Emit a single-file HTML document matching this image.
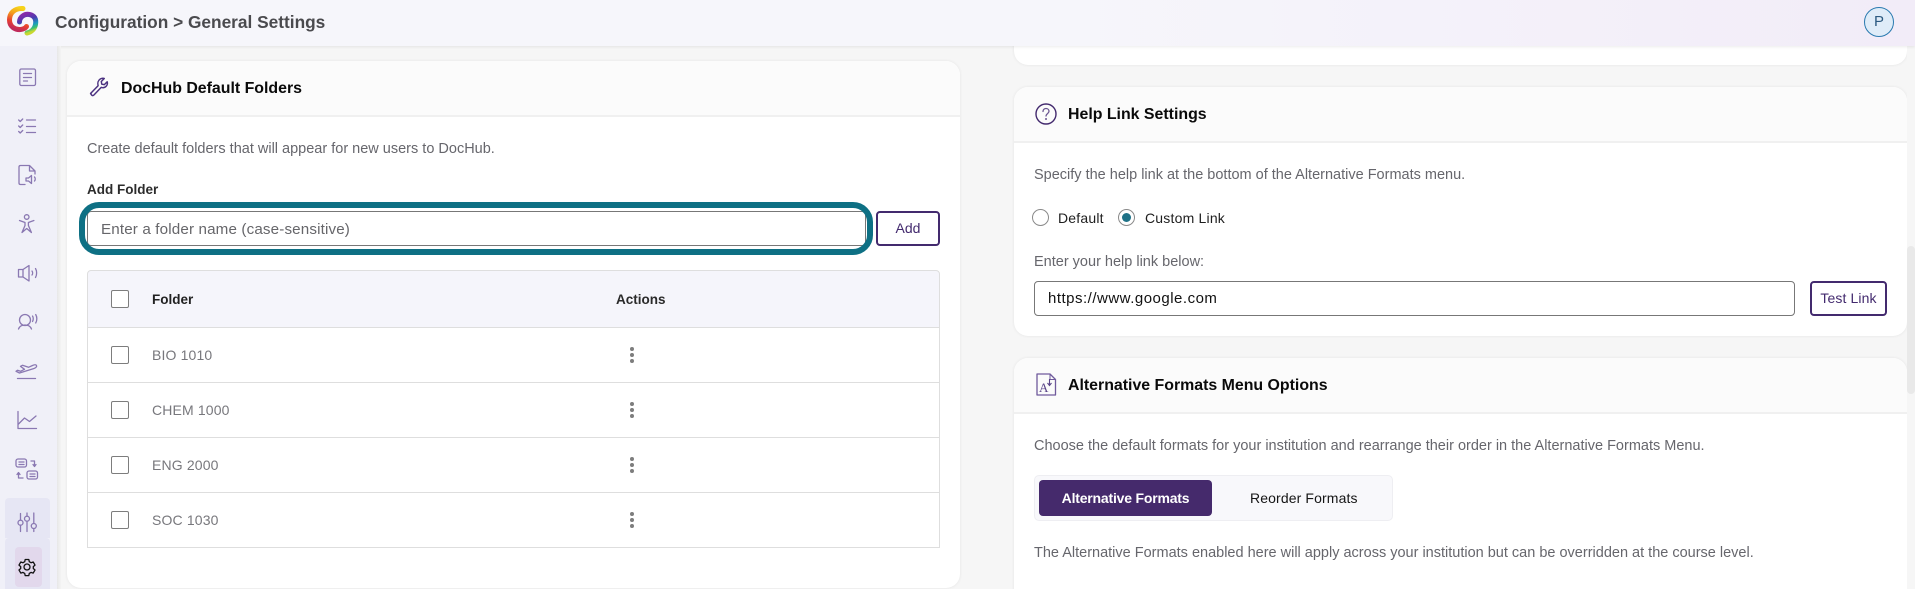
<!DOCTYPE html>
<html lang="en"><head><meta charset="utf-8"><title>Configuration &gt; General Settings</title>
<style>
*{box-sizing:border-box}
html,body{margin:0;padding:0;width:1915px;height:589px;overflow:hidden;background:#f6f6f6;font-family:"Liberation Sans",sans-serif}
#root{position:relative;width:1915px;height:589px;overflow:hidden;background:#f6f6f6}
.a{position:absolute}
.t{position:absolute;white-space:nowrap;line-height:20px;height:20px}
.card{position:absolute;background:#fff;border-radius:14px;box-shadow:0 0 3px rgba(0,0,0,.08);overflow:hidden}
.hd{position:absolute;left:0;right:0;top:0;background:#fbfbfb;border-bottom:2px solid #f0f0f0}
.h{font-size:15.9px;font-weight:bold;color:#0a0a0a}
.p{font-size:14.5px;color:#66666c}
.cb{position:absolute;left:111px;width:18px;height:18px;border:1.5px solid #7d7d7d;border-radius:2px;background:#fff}
.row{position:absolute;left:87px;width:853px;height:55px;border-bottom:1px solid #dedede;border-left:1px solid #dedede;border-right:1px solid #dedede}
.rt{font-size:14px;color:#77777c;left:152px;letter-spacing:.15px}
.btn{position:absolute;background:#fff;border:2px solid #432a6e;border-radius:4px;color:#432a6e;font-size:14px;text-align:center}
svg{position:absolute;overflow:visible}
.i{fill:none;stroke:#8a78b2;stroke-width:1.3;stroke-linecap:round;stroke-linejoin:round}
</style></head><body>
<div id="root">

<!-- main content -->
<div class="card" style="left:1014px;top:-40px;width:893px;height:105px"></div>

<div class="card" style="left:67px;top:61px;width:893px;height:527px">
  <div class="hd" style="height:56px"></div>
</div>
<svg style="left:89px;top:77px" width="20" height="20" viewBox="0 0 22 22"><path d="M1.7 18.2 10 9.6C9.2 6.6 10 3.6 12.4 2.2c1.4-.8 3-1 4.4-.6l-3.300 3.400.5 2.900 2.900.5 3.100-3.200c.5 1.600.2 3.500-1 4.800-1.500 1.600-3.800 2.100-5.600 1.400l-8 8.400c-.8.700-1.900.7-2.600 0-.7-.7-.8-1.900-.1-2.800z" fill="none" stroke="#4b3180" stroke-width="1.600" stroke-linejoin="round"/></svg>
<div class="t h" style="left:121px;top:79px">DocHub Default Folders</div>
<div class="t p" style="left:87px;top:139px">Create default folders that will appear for new users to DocHub.</div>
<div class="t" style="left:87px;top:180px;font-size:13.5px;font-weight:bold;color:#2c2c2c">Add Folder</div>

<div class="a" style="left:87px;top:211px;width:779px;height:35px;background:#fff;border:1px solid #777;border-radius:4px"></div>
<div class="t" style="left:101px;top:220px;font-size:15.200px;color:#66666a;letter-spacing:.14px">Enter a folder name (case-sensitive)</div>
<div class="a" style="left:79px;top:202px;width:794px;height:53px;border:6px solid #0e7084;border-radius:20px"></div>
<div class="btn" style="left:876px;top:211px;width:64px;height:35px;line-height:31px">Add</div>

<div class="a" style="left:87px;top:270px;width:853px;height:58px;background:#f5f5fb;border:1px solid #dedede;border-radius:4px 4px 0 0"></div>
<div class="cb" style="top:290px"></div>
<div class="t" style="left:152px;top:290px;font-size:13.500px;font-weight:bold;color:#222">Folder</div>
<div class="t" style="left:616px;top:290px;font-size:13.500px;font-weight:bold;color:#2a2a2a">Actions</div>

<div class="row" style="top:328px"></div>
<div class="row" style="top:383px"></div>
<div class="row" style="top:438px"></div>
<div class="row" style="top:493px"></div>

<div class="cb" style="top:346px"></div><div class="t rt" style="top:345px">BIO 1010</div>
<div class="cb" style="top:401px"></div><div class="t rt" style="top:400px">CHEM 1000</div>
<div class="cb" style="top:456px"></div><div class="t rt" style="top:455px">ENG 2000</div>
<div class="cb" style="top:511px"></div><div class="t rt" style="top:510px">SOC 1030</div>

<svg style="left:628px;top:345px" width="8" height="200" fill="#7d7d7d">
<circle cx="4" cy="4" r="2"/><circle cx="4" cy="10" r="2"/><circle cx="4" cy="16" r="2"/>
<circle cx="4" cy="59" r="2"/><circle cx="4" cy="65" r="2"/><circle cx="4" cy="71" r="2"/>
<circle cx="4" cy="114" r="2"/><circle cx="4" cy="120" r="2"/><circle cx="4" cy="126" r="2"/>
<circle cx="4" cy="169" r="2"/><circle cx="4" cy="175" r="2"/><circle cx="4" cy="181" r="2"/>
</svg>

<!-- Help link -->
<div class="card" style="left:1014px;top:87px;width:893px;height:249px">
  <div class="hd" style="height:56px"></div>
</div>
<svg style="left:1035px;top:103px" width="22" height="22" viewBox="0 0 22 22"><circle cx="11" cy="11" r="10" fill="none" stroke="#432a6e" stroke-width="1.400"/><path d="M8 8.500c0-1.800 1.300-3 3-3s3 1.200 3 2.800c0 2.200-3 2.400-3 4.700" fill="none" stroke="#6a5590" stroke-width="1.300" stroke-linecap="round"/><circle cx="11" cy="16" r="1" fill="#6a5590"/></svg>
<div class="t h" style="left:1068px;top:105px">Help Link Settings</div>
<div class="t p" style="left:1034px;top:165px">Specify the help link at the bottom of the Alternative Formats menu.</div>

<div class="a" style="left:1032px;top:209px;width:17px;height:17px;border:1.200px solid #8a8a8a;border-radius:50%;background:#fff"></div>
<div class="t" style="left:1058px;top:208px;font-size:14px;color:#1e1e1e;letter-spacing:.2px">Default</div>
<div class="a" style="left:1118px;top:209px;width:17px;height:17px;border:1.200px solid #8a8a8a;border-radius:50%;background:#fff"></div>
<div class="a" style="left:1122px;top:213px;width:9px;height:9px;border-radius:50%;background:#1f7287"></div>
<div class="t" style="left:1145px;top:208px;font-size:14px;color:#1e1e1e;letter-spacing:.2px">Custom Link</div>

<div class="t p" style="left:1034px;top:252px">Enter your help link below:</div>
<div class="a" style="left:1034px;top:281px;width:761px;height:35px;background:#fff;border:1px solid #777;border-radius:4px"></div>
<div class="t" style="left:1048px;top:289px;font-size:15px;color:#111;letter-spacing:.5px">https://www.google.com</div>
<div class="btn" style="left:1810px;top:281px;width:77px;height:35px;line-height:31px;letter-spacing:.1px">Test Link</div>

<!-- Alternative Formats -->
<div class="card" style="left:1014px;top:358px;width:893px;height:260px">
  <div class="hd" style="height:56px"></div>
</div>
<svg style="left:1035px;top:372px" width="22" height="25" viewBox="0 0 22 25"><path d="M2 2h13l5.500 5.500V23H2z" fill="none" stroke="#6f5a9c" stroke-width="1.300" stroke-linejoin="round"/><path d="M15 2v5.500h5.500" fill="none" stroke="#6f5a9c" stroke-width="1"/><text x="4" y="20" font-family="Liberation Serif,serif" font-size="13" fill="#5a4488">A</text><path d="M14.500 7v6M12.500 11l2 2.500 2-2.500" fill="none" stroke="#5a4488" stroke-width="1.100"/></svg>
<div class="t h" style="left:1068px;top:376px">Alternative Formats Menu Options</div>
<div class="t p" style="left:1034px;top:436px">Choose the default formats for your institution and rearrange their order in the Alternative Formats Menu.</div>

<div class="a" style="left:1034px;top:475px;width:359px;height:46px;background:#f8f8fb;border:1px solid #eeeef2;border-radius:5px"></div>
<div class="a" style="left:1039px;top:480px;width:173px;height:36px;background:#452a6c;border-radius:4px;color:#fff;font-size:14px;font-weight:bold;text-align:center;line-height:36px;letter-spacing:-.2px">Alternative Formats</div>
<div class="t" style="left:1250px;top:488px;font-size:14px;color:#151515;letter-spacing:.12px">Reorder Formats</div>
<div class="t p" style="left:1034px;top:543px">The Alternative Formats enabled here will apply across your institution but can be overridden at the course level.</div>

<!-- scrollbar -->
<div class="a" style="left:1907px;top:46px;width:8px;height:543px;background:#f6f6f6"></div>
<div class="a" style="left:1907px;top:246px;width:8px;height:148px;background:#e9e9e9;border-radius:4px"></div>

<!-- header -->
<div class="a" style="left:0;top:0;width:1915px;height:46px;background:linear-gradient(90deg,#f6f6fb 0%,#f6f6fb 55%,#f2ecf8 100%);box-shadow:0 1px 3px rgba(0,0,0,.08)"></div>
<svg style="left:6px;top:5px" width="34" height="32" viewBox="0 0 34 32" fill="none" stroke-linecap="round">
<defs>
<linearGradient id="g1" x1="0.700" y1="0" x2="0.400" y2="1"><stop offset="0" stop-color="#f6d21a"/><stop offset=".35" stop-color="#f39a1d"/><stop offset=".7" stop-color="#e8402f"/><stop offset="1" stop-color="#c02a5a"/></linearGradient>
<linearGradient id="g2" x1="0.200" y1="0" x2="0.500" y2="1"><stop offset="0" stop-color="#8a2aa8"/><stop offset=".35" stop-color="#4a3cb0"/><stop offset=".65" stop-color="#1a9ac0"/><stop offset=".85" stop-color="#3cc070"/><stop offset="1" stop-color="#c8d830"/></linearGradient>
</defs>
<path d="M17 3.500C8 3 3.500 8.500 3.500 15c0 7 6 10 11 9.500 3-.3 5-1.500 6-3" stroke="url(#g1)" stroke-width="5"/>
<path d="M13.500 17c0-5 5-8.500 10-7.500 5 1 7 4.500 6 10-1 5-5 8-8.500 8.500" stroke="url(#g2)" stroke-width="5"/>
</svg>
<div class="t" style="left:55px;top:12px;font-size:17.300px;font-weight:bold;color:#4a4a4e">Configuration &gt; General Settings</div>
<div class="a" style="left:1864px;top:7px;width:30px;height:30px;border:1.500px solid #2a7ab0;border-radius:50%;background:#dfecf8;color:#2c5a80;font-size:15px;text-align:center;line-height:27px">P</div>

<!-- sidebar -->
<div class="a" style="left:57px;top:46px;width:4px;height:543px;background:linear-gradient(90deg,#e7e7e7,#f4f4f4)"></div>
<div class="a" style="left:0;top:46px;width:57px;height:543px;background:#f0f0f8"></div>
<div class="a" style="left:5px;top:498px;width:45px;height:40px;background:#e6e6f4;border-radius:4px 4px 0 0"></div>
<div class="a" style="left:5px;top:538px;width:45px;height:51px;background:#e6e6f4;border-radius:4px 4px 0 0"></div>
<div class="a" style="left:15px;top:547px;width:27px;height:40px;background:#e2d8ec;border-radius:4px"></div>

<svg style="left:0;top:46px" width="57" height="543" viewBox="0 46 57 543">
<g class="i">
<!-- doc -->
<rect x="19.800" y="69" width="15.700" height="16.500" rx="1.500"/><path d="M23.500 73.500h8M23.500 77.500h8M23.500 81h4"/>
<!-- checklist -->
<path d="M18.700 120l1.500 1.500 2.500-2.500M18.700 126l1.500 1.500 2.500-2.500M18.700 131.500l1.500 1.500 2.500-2.500M26.500 120h9M26.500 126.500h9M26.500 132.500h9"/>
<!-- doc speaker -->
<path d="M25 184.500h-4.500c-1 0-1.500-.6-1.500-1.500v-16c0-1 .6-1.500 1.500-1.500h9l5.500 5.500v3M29.500 165.500v5.500h5.500"/><path d="M26 178h2.500l3-2.500v8l-3-2.500H26zM34.500 177c1 1 1 3 0 4"/>
<!-- person -->
<circle cx="26.700" cy="217" r="2.300"/><path d="M19.500 220.500l5.500 2v3l-3 7 4.700-4 4.700 4-3-7v-3l5.500-2"/>
<!-- speaker -->
<path d="M18.500 269.500h4.500l6-4v15.500l-6-4h-4.500z"/><path d="M23 269.500v7"/><path d="M32 271c.8 1.200.8 3 0 4M35.500 268.500c1.500 2.500 1.500 6.500 0 9"/>
<!-- person voice -->
<circle cx="25" cy="320" r="5.500"/><path d="M18.500 329c1-2.700 3.500-4 6.500-4s5.500 1.300 6.500 4M32.500 316c1 1.500 1 4 0 5.500M35.700 314.500c1.500 2.500 1.500 6 0 8.500"/>
<!-- plane -->
<path d="M17.500 378.500h18"/><path d="M19.500 373l14.500-4.500c2-.6 3-2 2.500-3-.5-1-2-1-4 0l-4 1.800-6-2-2 1 4 3-4 2-3-1-1.500 1z"/>
<!-- chart -->
<path d="M18 411.500v17h18.500"/><path d="M18.500 424l6-6 5 3.500 6.500-5.500"/>
<!-- swap -->
<rect x="16" y="459" width="10.500" height="8" rx="2"/><rect x="27" y="471" width="10.500" height="8" rx="2"/><path d="M19 462h5M19 464.500h5M30 474h5M30 476.500h5"/><path d="M31 461h3.500v5M33 464.500l1.500 2 1.500-2M23 478h-4.500v-5M17 474.500l1.500-2 1.500 2"/>
<!-- sliders -->
<path d="M20.500 513.500v6M20.500 526v5.500M27 513v2.500M27 522v9.500M33.800 513v10M33.800 529.500v2"/><circle cx="20.500" cy="522.700" r="2.500"/><circle cx="27" cy="518.700" r="2.500"/><circle cx="33.800" cy="526" r="2.500"/>
</g>
<!-- gear -->
<g fill="none" stroke="#111" stroke-width="1.300" stroke-linejoin="round">
<circle cx="27" cy="567" r="3"/>
<path d="M25.200 559.500h3.600l.5 2.200 1.700 1 2.200-.7 1.800 3.100-1.700 1.500v1.900l1.700 1.500-1.800 3.100-2.200-.7-1.700 1-.5 2.200h-3.600l-.5-2.200-1.700-1-2.200.7-1.800-3.100 1.700-1.500v-1.900l-1.700-1.500 1.800-3.100 2.200.7 1.700-1z"/>
</g>
</svg>
</div>
</body></html>
